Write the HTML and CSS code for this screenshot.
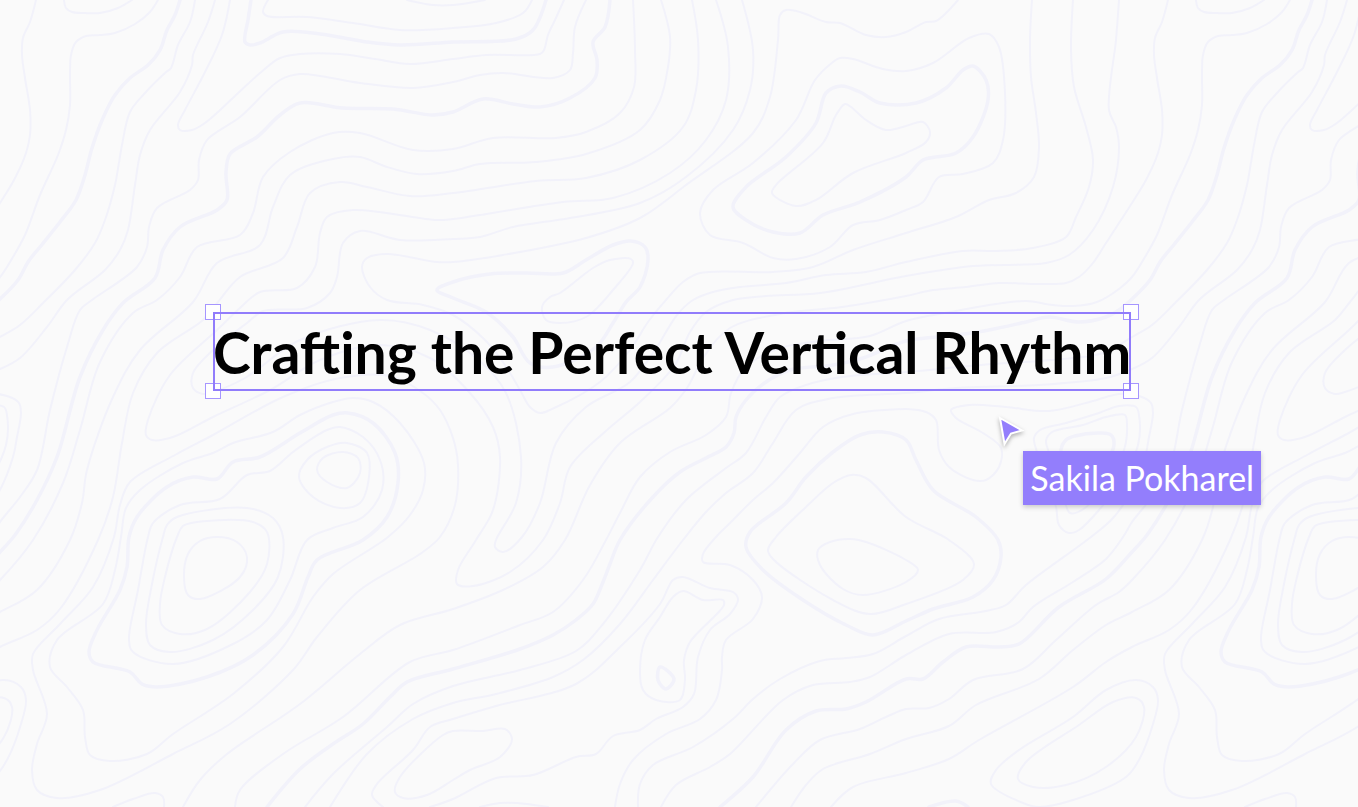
FILE: index.html
```html
<!DOCTYPE html>
<html lang="en">
<head>
<meta charset="utf-8">
<meta name="viewport" content="width=device-width, initial-scale=1">
<title>Crafting the Perfect Vertical Rhythm</title>
<link rel="stylesheet" href="styles.css">
</head>
<body>
<main class="stage">
  <svg class="contours" viewBox="0 0 1358 807" preserveAspectRatio="xMidYMid slice" aria-hidden="true">
    <defs><g id="tile"></g></defs>
    <use href="#tile" x="-1132"/>
    <use href="#tile"/>
    <use href="#tile" x="1132"/>
  </svg>
  <div class="selection">
    <span class="handle top left"></span>
    <span class="handle top right"></span>
    <span class="handle bottom left"></span>
    <span class="handle bottom right"></span>
    <h1 class="title">Crafting the Perfect Vertical Rhythm</h1>
    <div class="collaborator">
      <svg class="pointer" viewBox="0 0 32 36" aria-hidden="true">
        <path d="M5 5 L27 17.500 L16 20.500 L9.500 31 Z"/>
      </svg>
      <span class="name">Sakila Pokharel</span>
    </div>
  </div>
</main>
<script src="contours.js"></script>
</body>
</html>
```

FILE: styles.css
```css
* { box-sizing: border-box; }
body { margin: 0; background: #fafafa; font-family: Lato, "Liberation Sans", sans-serif; }
.stage {
  position: relative;
  display: flex;
  justify-content: center;
  align-items: flex-start;
  min-height: 100vh;
  padding: 312px 14px 0 0;
  overflow: hidden;
}
.contours { position: absolute; inset: 0; width: 100%; height: 100%; }
.contours path { fill: none; stroke: #f2f2fa; stroke-width: 2; stroke-linecap: round; stroke-linejoin: round; }
.contours .index { stroke-width: 3.5; }
.selection { position: relative; height: 79px; }
.selection::after {
  content: "";
  position: absolute;
  inset: 0;
  border: 2px solid #917cfb;
}
.title {
  position: relative;
  margin: 0;
  color: #000;
  font-size: 57px;
  font-weight: 700;
  line-height: 80px;
  white-space: nowrap;
}
.handle { position: absolute; width: 16px; height: 16px; background: #fff; border: 1px solid #a696ff; }
.top { top: -8px; }
.bottom { bottom: -8px; }
.left { left: -8px; }
.right { right: -8px; }
.collaborator { position: absolute; top: 101px; right: -130px; display: flex; align-items: flex-start; }
.pointer { width: 32px; height: 36px; margin-right: -4px; overflow: visible; filter: drop-shadow(0 2px 2px rgba(0, 0, 0, .3)); }
.pointer path { fill: #937efc; stroke: #fff; stroke-width: 2; }
.name {
  margin-top: 38px;
  padding: 0 7px;
  background: #937efc;
  color: #fff;
  font-size: 34px;
  line-height: 54px;
  white-space: nowrap;
  box-shadow: 0 2px 5px rgba(0, 0, 0, .2);
}
```

FILE: contours.js
```js
// Contour lines of one map tile; the tile repeats every 1132 units.
const thin = [
"64,0 66,8 72,12 85,13 100,13 118,8 132,0",
"36,0 30,22 23,38 22,55 25,78 30,110 30,135 26,153 14,180 0,203 -26,243 -39,263 -53,277 -66,283 -93,284 -133,283 -166,287 -199,290 -226,296 -290,307 -352,314 -402,328 -427,355 -445,388 -462,408 -512,443 -542,485 -567,540 -589,567 -629,590 -679,609 -732,625 -772,654 -832,704 -905,754 -932,780 -949,807",
"158,0 150,12 135,24 115,33 100,35 86,36 76,42 71,55 70,75 70,105 66,130 58,155 40,195 25,235 10,262 0,277 -13,289 -35,302 -59,306 -79,305 -106,301 -136,304 -176,311 -226,321 -262,336 -312,341 -355,349 -387,368 -401,393 -406,417 -426,435 -462,452 -492,477 -512,513 -526,540 -549,580 -579,612 -612,625 -679,650 -722,662 -789,717 -849,754 -892,790 -897,807",
"195,0 190,22 178,45 171,68 165,73 145,93 130,112 122,145 115,185 105,220 95,243 75,270 43,303 20,325 0,337 -29,353 -80,360 -140,364 -226,372 -290,377 -326,385 -352,397 -366,417 -386,453 -406,468 -446,500 -474,537 -492,570 -529,624 -556,651 -612,670 -679,686 -719,704 -745,727 -799,774 -827,807",
"215,0 208,22 193,55 192,65 180,92 150,130 140,155 135,185 128,230 120,250 105,270 67,300 47,327 20,358 0,369 -26,378 -93,385 -176,388 -226,393 -299,398 -336,410 -359,443 -379,473 -406,493 -426,512 -449,540 -479,580 -512,624 -549,660 -579,677 -636,694 -679,703 -719,719 -765,754 -802,807",
"230,0 222,35 205,72 185,110 178,125 180,130 192,130 205,123 235,96 260,73 280,58 300,54 340,54 375,59 410,64 453,59 486,55 540,54 544,50 548,35 555,20 564,0",
"586,0 575,27 573,53 570,70 553,78 503,73 480,75 453,82 413,88 360,83 300,74 280,80 240,117 207,140 199,160 198,180 190,190 157,208 149,227 147,247 137,267 92,300 80,310 67,347 50,410 37,470 20,497 0,522 -9,537 -26,559 -59,582 -99,607 -113,622 -136,632 -183,634 -226,655 -262,677 -282,682 -319,685 -349,700 -402,754 -422,767 -456,785 -471,807",
"906,409 926,412 936,420 939,450 949,467 973,480 986,480 999,467 1001,448 983,433 956,418 951,410 969,405 1006,407 1049,411 1093,401 1119,394 1139,396 1151,403 1153,413 1149,437 1145,457 1132,490 1113,518 1091,537 1026,585 1006,605 986,611 939,619 906,636 873,654 846,658 820,661 780,679 753,699 733,719 693,747 653,765 640,784 638,807",
"906,409 853,414 823,427 800,453 773,483 753,500 730,523 716,537 703,554 703,562 730,565 753,580 762,597 753,619 726,640 722,657 722,670 716,700 700,719 666,734 633,760 620,784 615,807",
"1136,407 1119,406 1099,413 1066,423 1040,430 1034,438 1038,455 1048,485 1056,507 1059,525 1069,533 1079,530 1099,510 1122,480 1138,445 1139,415 z",
"1125,415 1106,417 1083,425 1052,432 1046,441 1050,455 1062,490 1070,513 1085,508 1108,480 1124,450 1127,425 z",
"633,0 635,50 634,87 620,113 586,132 556,138 493,138 453,149 413,150 360,133 333,133 290,152 263,177 253,213 240,235 197,247 180,277 157,300 133,313 100,362 80,430 63,483 33,540 0,580 -13,592 -36,605 -76,640 -109,669 -159,680 -183,699 -203,708 -226,709 -246,717 -272,729 -312,740 -339,764 -376,807",
"661,0 670,37 668,67 660,100 640,130 586,154 536,162 480,164 453,171 417,174 387,167 360,157 333,159 290,175 273,207 260,245 217,263 193,302 140,350 113,397 87,470 82,503 70,540 37,590 0,612 -26,625 -59,650 -93,679 -156,705 -183,726 -226,739 -262,754 -309,769 -326,785 -341,807",
"692,0 698,40 696,90 683,127 640,160 586,178 536,181 453,193 410,196 367,187 340,182 310,193 297,227 283,258 240,277 218,302 203,320 157,353 133,393 122,443 113,497 98,540 60,609 37,630 0,647 -26,662 -59,687 -153,740 -183,759 -226,773 -279,787 -301,807",
"716,0 728,47 726,100 706,140 670,173 613,198 563,202 453,219 437,220 353,210 327,217 320,233 315,267 297,288 260,292 240,308 217,330 170,375 148,420 146,435 152,440 173,437 213,417 270,390 320,360 380,345 430,358 470,393 493,427 500,457 493,510 476,540 458,570 457,584 473,586 510,572 543,540 560,503 570,467 607,430 640,402 675,365 690,332 706,312 733,300 766,296 820,293 906,276 973,266 1046,263 1069,255 1093,230 1113,187 1119,147 1116,127 1109,110 1116,40 1119,0",
"742,0 753,50 750,90 733,130 686,177 640,203 570,218 513,227 480,237 453,239 400,240 360,231 343,243 337,277 330,293 307,308 263,311 247,323 213,350 193,373 193,388 203,394 213,392 245,378 300,340 380,320 430,330 480,361 506,393 521,457 516,503 496,540 495,547 503,552 522,537 540,503 556,443 586,407 630,382 655,350 677,315 693,300 713,292 740,287 786,283 826,275 866,272 906,262 963,251 996,251 1033,248 1066,237 1076,217 1089,187 1093,160 1086,127 1074,87 1071,50 1073,0",
"958,0 936,21 926,22 906,32 886,37 866,35 840,23 826,22 800,12 786,10 780,15 778,40 770,97 753,133 686,185 640,218 586,238 503,255 453,262 437,262 387,254 367,258 362,267 370,287 387,300 423,305 453,315 485,340 505,365 520,390 530,407 540,413 552,409 600,382 630,350 648,322 666,300 683,282 700,273 773,272 813,267 853,250 906,233 956,217 989,200 1016,193 1034,177 1039,147 1036,113 1031,77 1030,40 1032,0",
"631,259 610,260 593,268 560,293 550,297 542,307 546,320 560,323 586,317 613,290 633,263 z",
"268,0 263,12 267,16 307,17 353,23 400,30 453,28 496,23 523,13 532,0",
"407,0 433,5 453,5 485,0",
"840,58 833,62 815,80 796,120 753,163 713,190 700,213 710,235 743,243 773,258 796,259 830,247 853,225 880,220 906,210 923,202 939,177 963,174 993,163 1003,140 1005,93 999,47 989,34 969,38 933,63 906,71 883,69 853,59 z",
"845,104 836,115 823,143 776,185 772,193 796,206 816,200 853,173 906,153 926,142 930,132 923,122 906,126 886,130 866,120 851,107 z",
"423,393 440,410 453,438 458,465 455,505 440,537 420,554 360,590 317,637 293,670 230,724 173,754 100,790 57,798 37,790 32,770 37,744 47,714 33,670 33,654 60,624 93,587 114,537 120,505 130,482 175,455 213,435 283,397 340,378 390,376 z",
"353,398 373,402 400,423 424,463 423,490 410,515 388,537 333,574 313,597 283,647 233,694 173,734 147,754 110,761 90,755 85,737 83,710 67,687 50,667 57,640 103,604 115,570 121,537 126,508 140,490 183,463 213,453 233,443 273,432 300,415 333,402 z",
"340,427 363,437 380,460 382,490 363,517 333,528 307,540 290,580 267,620 233,644 173,664 133,652 129,640 138,590 148,537 153,523 180,505 220,499 247,475 270,471 293,452 327,430 z",
"347,443 367,453 369,477 360,503 340,508 313,497 299,477 307,460 327,447 z",
"343,452 358,458 360,473 347,488 327,482 317,470 323,458 z",
"177,517 247,508 273,518 283,537 278,577 253,610 213,640 170,652 150,645 146,624 152,584 163,537 167,525 z",
"197,522 253,522 267,532 267,564 250,592 207,629 180,634 162,625 160,604 165,577 177,537 183,526 z",
"217,537 237,542 247,557 240,577 200,599 188,595 184,577 188,554 200,541 z",
"1136,680 1153,687 1158,700 1153,724 1139,760 1126,777 1073,800 1039,807 1023,803 991,784 996,770 1019,750 1073,717 1106,690 z",
"1136,698 1144,707 1136,737 1106,767 1066,785 1033,787 1018,779 1026,762 1079,725 1113,702 z",
"113,807 133,799 155,793 163,797 164,807",
"851,475 866,478 906,517 949,540 974,564 963,580 906,604 870,614 833,600 773,559 768,550 776,537 806,507 833,483 z",
"850,539 866,542 906,560 918,570 906,582 863,595 843,589 820,565 818,550 830,542 z",
"383,807 372,795 377,784 413,750 430,727 453,719 496,706 576,684 620,647 660,604 673,580 683,577 710,588 733,592 738,599 730,614 710,630 698,657 694,694 683,707 656,719 640,730 613,736 596,754 576,757 533,775 496,778 453,799 430,807",
"683,591 703,600 723,600 724,605 690,642 684,660 685,680 680,700 656,700 643,690 640,670 645,640 660,617 673,597 z",
"443,735 400,777 395,792 403,798 427,795 453,780 470,770 500,757 512,739 505,729 483,731 453,731 z",
"480,807 500,803 517,803 548,807"
];
const index = [
"180,0 175,15 167,30 160,50 148,65 130,78 115,95 103,118 92,148 85,175 76,200 60,222 40,247 28,262 18,280 0,299 -13,310 -26,317 -53,322 -83,317 -106,322 -143,330 -176,335 -226,341 -269,358 -299,365 -342,370 -366,382 -386,400 -396,417 -398,433 -406,447 -426,458 -452,472 -479,497 -512,540 -522,564 -531,587 -539,604 -556,620 -579,635 -612,649 -679,669 -725,682 -742,697 -769,724 -799,744 -832,769 -865,807",
"610,0 605,27 593,42 597,60 595,78 570,98 540,107 513,104 483,99 453,112 433,115 393,109 343,108 300,103 280,115 257,137 230,154 226,173 227,200 217,210 180,227 163,250 155,278 123,303 103,330 80,377 57,457 37,500 15,535 0,552 -26,579 -73,607 -113,644 -133,647 -166,647 -189,662 -209,679 -226,679 -266,702 -286,709 -316,711 -346,730 -379,777 -412,807",
"453,282 490,274 526,273 563,273 586,260 613,245 631,241 645,247 648,260 640,287 626,302 613,323 596,347 553,367 530,363 513,337 486,312 453,298 437,290 z",
"251,0 248,20 245,42 250,45 260,43 283,32 320,34 367,42 400,45 453,42 516,39 533,30 546,0",
"841,86 826,93 816,123 786,157 746,187 733,207 746,220 773,232 800,233 823,215 860,202 906,177 923,160 956,153 973,137 988,100 986,80 973,66 963,70 946,88 916,103 880,103 860,92 z",
"1066,440 1075,436 1100,433 1111,435 1114,445 1106,462 1090,480 1075,490 1064,470 1061,450 z",
"348,413 373,423 395,453 398,483 387,517 363,540 317,560 308,577 293,614 253,655 207,677 157,687 142,684 130,672 93,662 89,652 97,630 120,590 127,567 129,537 137,517 167,487 193,477 217,479 233,462 260,457 300,433 333,415 z",
"929,807 956,801 968,807",
"883,432 906,440 916,460 933,490 976,517 998,540 1001,557 993,580 973,597 933,609 906,621 873,635 846,625 803,600 763,570 746,547 750,532 786,503 806,477 833,452 860,435 z",
"660,667 674,679 666,689 658,680 z"
];

// Smooth curve through the points: centripetal spacing, cubic segments.
function smooth(text) {
  const closed = text.endsWith("z");
  const p = text.replace(" z", "").split(" ").map(s => s.split(",").map(Number));
  const n = p.length;
  const at = i => closed ? p[(i + n) % n] : p[Math.max(0, Math.min(n - 1, i))];
  const gap = (a, b) => Math.max(Math.sqrt(Math.hypot(a[0] - b[0], a[1] - b[1])), 0.001);
  let d = "M" + p[0];
  for (let i = 0; i < (closed ? n : n - 1); i++) {
    const a = at(i - 1), b = at(i), c = at(i + 1), e = at(i + 2);
    const u = gap(a, b), v = gap(b, c), w = gap(c, e);
    const h1 = [0, 1].map(k => a === b ? b[k] :
      (u * u * c[k] - v * v * a[k] + (2 * u * u + 3 * u * v + v * v) * b[k]) / (3 * u * (u + v)));
    const h2 = [0, 1].map(k => c === e ? c[k] :
      (w * w * b[k] - v * v * e[k] + (2 * w * w + 3 * w * v + v * v) * c[k]) / (3 * w * (w + v)));
    d += "C" + [...h1, ...h2, ...c].map(x => x.toFixed(1)).join(" ");
  }
  return d + (closed ? "Z" : "");
}

function draw(lines, name) {
  for (const line of lines) {
    const path = document.createElementNS("http://www.w3.org/2000/svg", "path");
    path.setAttribute("d", smooth(line));
    path.setAttribute("class", name);
    document.getElementById("tile").append(path);
  }
}
draw(thin, "line");
draw(index, "index");
```
